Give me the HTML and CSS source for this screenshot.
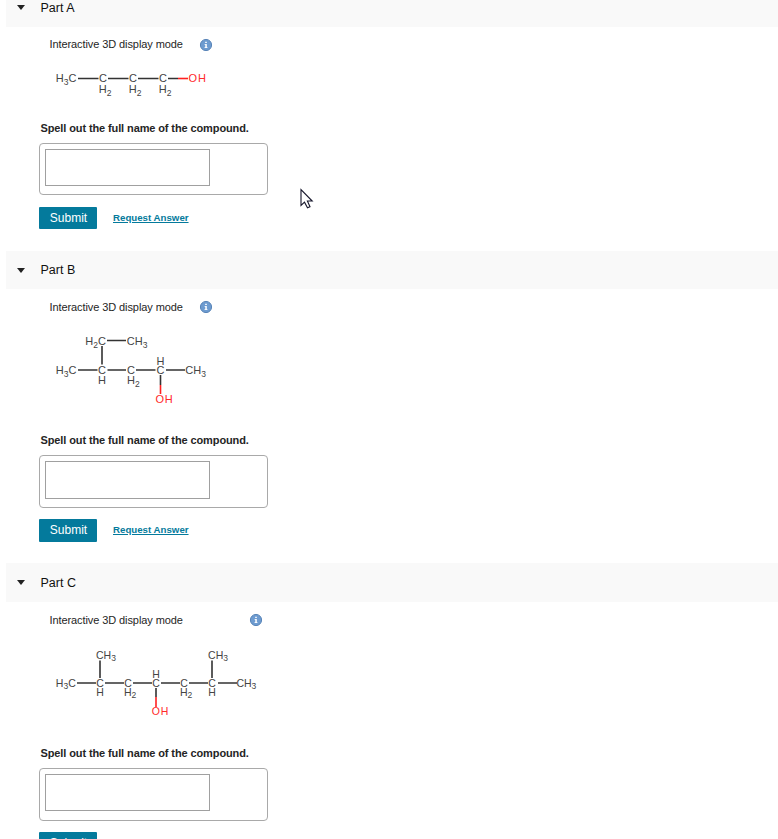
FILE: index.html
```html
<!DOCTYPE html>
<html lang="en">
<head>
    <meta charset="UTF-8">
    <meta name="viewport" content="width=device-width, initial-scale=1.0">
    <title>Naming Alcohols</title>
    <link rel="stylesheet" href="styles.css">
</head>
<body>

    <main class="parts">
        <section class="part part-a">
            <header class="part-header">
                <span class="arrow"></span>
                <h2>Part A</h2>
            </header>
            <div class="mode">
                <span class="mode-label">Interactive 3D display mode</span>
                <svg class="info" width="14" height="14" viewBox="0 0 14 14">
                    <circle cx="7" cy="7" r="5.6" fill="#6d9bd0" stroke="#5985b8"/>
                    <path d="M6.2 3.8h1.6v1.3H6.2zM5.6 6H7.8v3.2h.7v.9h-3v-.9h.8V6.8h-.7z" fill="#fff"/>
                </svg>
            </div>
            <!-- 1-butanol -->
            <svg class="molecule" width="220" height="59">
                <g class="bonds">
                    <path d="M28 18.5H48.5M58 18.5H78.5M88 18.5H108.5M118 18.5H128"/>
                    <path class="red" d="M128 18.5H138"/>
                </g>
                <text x="5.8" y="22">H<tspan class="sub" dy="2.5">3</tspan><tspan dy="-2.5">C</tspan></text>
                <text x="49" y="22">C</text>
                <text x="79" y="22">C</text>
                <text x="109" y="22">C</text>
                <text class="red" x="138.4" y="22" textLength="17.6">OH</text>
                <text x="48.8" y="33">H<tspan class="sub" dy="2.5">2</tspan></text>
                <text x="78.8" y="33">H<tspan class="sub" dy="2.5">2</tspan></text>
                <text x="108.8" y="33">H<tspan class="sub" dy="2.5">2</tspan></text>
            </svg>
            <p class="prompt">Spell out the full name of the compound.</p>
            <div class="answer"><input type="text"></div>
            <div class="actions">
                <button class="submit">Submit</button>
                <a class="request" href="#">Request Answer</a>
            </div>
        </section>

        <section class="part part-b">
            <header class="part-header">
                <span class="arrow"></span>
                <h2>Part B</h2>
            </header>
            <div class="mode">
                <span class="mode-label">Interactive 3D display mode</span>
                <svg class="info" width="14" height="14" viewBox="0 0 14 14">
                    <circle cx="7" cy="7" r="5.6" fill="#6d9bd0" stroke="#5985b8"/>
                    <path d="M6.2 3.8h1.6v1.3H6.2zM5.6 6H7.8v3.2h.7v.9h-3v-.9h.8V6.8h-.7z" fill="#fff"/>
                </svg>
            </div>
            <!-- 4-methyl-2-hexanol -->
            <svg class="molecule" width="220" height="109.5">
                <g class="bonds">
                    <path d="M57 18.5H76M52 24V42.5M28 48H47.5M57.5 48H76M86 48H105.5M116 48H135M110.5 53V63"/>
                    <path class="red" d="M110.5 63V72"/>
                </g>
                <text x="35.3" y="23">H<tspan class="sub" dy="2.5">2</tspan><tspan dy="-2.5">C</tspan></text>
                <text x="76.8" y="23">CH<tspan class="sub" dy="2.5">3</tspan></text>
                <text x="5.8" y="52">H<tspan class="sub" dy="2.5">3</tspan><tspan dy="-2.5">C</tspan></text>
                <text x="48" y="52">C</text>
                <text x="77" y="52">C</text>
                <text x="106.4" y="52">C</text>
                <text x="135.3" y="52">CH<tspan class="sub" dy="2.5">3</tspan></text>
                <text x="106.4" y="43">H</text>
                <text x="48" y="62">H</text>
                <text x="77" y="62">H<tspan class="sub" dy="2.5">2</tspan></text>
                <text class="red" x="105.6" y="81" textLength="17.2">OH</text>
            </svg>
            <p class="prompt">Spell out the full name of the compound.</p>
            <div class="answer"><input type="text"></div>
            <div class="actions">
                <button class="submit">Submit</button>
                <a class="request" href="#">Request Answer</a>
            </div>
        </section>

        <section class="part part-c">
            <header class="part-header">
                <span class="arrow"></span>
                <h2>Part C</h2>
            </header>
            <div class="mode">
                <span class="mode-label">Interactive 3D display mode</span>
                <svg class="info" width="14" height="14" viewBox="0 0 14 14">
                    <circle cx="7" cy="7" r="5.6" fill="#6d9bd0" stroke="#5985b8"/>
                    <path d="M6.2 3.8h1.6v1.3H6.2zM5.6 6H7.8v3.2h.7v.9h-3v-.9h.8V6.8h-.7z" fill="#fff"/>
                </svg>
            </div>
            <!-- 2,6-dimethyl-4-heptanol -->
            <svg class="molecule" width="220" height="109.75">
                <g class="bonds">
                    <path d="M50 25.5V43M162 25.5V43M27 48H46M55 48H74M83 48H102M111 48H130M139 48H158M168 48H187M106 53V62"/>
                    <path class="red" d="M106 62V72"/>
                </g>
                <text x="46" y="24">CH<tspan class="sub" dy="2">3</tspan></text>
                <text x="158.1" y="24">CH<tspan class="sub" dy="2">3</tspan></text>
                <text x="5.8" y="52">H<tspan class="sub" dy="2">3</tspan><tspan dy="-2">C</tspan></text>
                <text x="46.2" y="52">C</text>
                <text x="74.2" y="52">C</text>
                <text x="102.2" y="52">C</text>
                <text x="130.2" y="52">C</text>
                <text x="158.2" y="52">C</text>
                <text x="186.4" y="52">CH<tspan class="sub" dy="2">3</tspan></text>
                <text x="102.2" y="43">H</text>
                <text x="46.2" y="61">H</text>
                <text x="74" y="61">H<tspan class="sub" dy="2">2</tspan></text>
                <text x="130" y="61">H<tspan class="sub" dy="2">2</tspan></text>
                <text x="158.2" y="61">H</text>
                <text class="red" x="101.8" y="80" textLength="16.6">OH</text>
            </svg>
            <p class="prompt">Spell out the full name of the compound.</p>
            <div class="answer"><input type="text"></div>
            <div class="actions">
                <button class="submit">Submit</button>
                <a class="request" href="#">Request Answer</a>
            </div>
        </section>
    </main>

    <svg class="pointer" width="14" height="22" viewBox="0 0 14 22">
        <path d="M1 1.5V17.5L4.5 14.2L7.5 19.8L10 18.7L7.4 13H12.2Z" fill="#fff" stroke="#15152a" stroke-width="1.1"/>
    </svg>

</body>
</html>
```
FILE: styles.css
```css
html, body {
    height: 100%;
    overflow: hidden;
}
body {
    margin: 0;
    background-color: #fff;
    color: #252525;
    font-family: Arial, "Liberation Sans", sans-serif;
}
.parts {
    margin-top: -11.5px;
    padding-left: 6px;
}
.part-header {
    display: flex;
    align-items: center;
    box-sizing: border-box;
    height: 38.5px;
    padding: 1px 0 0 11px;
    background-color: #f9f9f9;
}
.part-a .part-header {
    padding-top: 0;
}
.part-header h2 {
    margin: 0 0 0 15.5px;
    font-size: 12.5px;
    font-weight: normal;
    color: #111;
}
.arrow {
    border-left: 4.5px solid transparent;
    border-right: 4.5px solid transparent;
    border-top: 5px solid #222;
}
.mode {
    display: flex;
    align-items: center;
    justify-content: space-between;
    width: 163.5px;
    height: 35px;
    margin-bottom: -2px;
    padding-left: 43.5px;
    font-size: 11px;
    letter-spacing: -0.09px;
}
.part-a .mode-label {
    margin-top: -1px;
}
.part-c .mode {
    width: 213.5px;
    height: 36px;
    margin-bottom: -3px;
}
.molecule {
    display: block;
    margin-left: 44px;
    font-size: 11px;
    fill: #444;
}
.part-c .molecule {
    font-size: 10.5px;
}
.molecule .sub {
    font-size: 8.5px;
}
.molecule text.red {
    fill: #ff2a2a;
}
.bonds {
    fill: none;
    stroke: #333;
    stroke-width: 1.6;
}
.bonds .red {
    stroke: #ff2020;
}
.prompt {
    height: 23.75px;
    margin: 0 0 0 34.5px;
    line-height: 18px;
    font-size: 11px;
    font-weight: bold;
    letter-spacing: -0.11px;
}
.part-b .prompt {
    line-height: 17px;
}
.answer {
    box-sizing: border-box;
    width: 229px;
    height: 52.5px;
    margin-left: 33px;
    padding: 5px;
    border: 1px solid #a9a9a9;
    border-radius: 4px;
}
.answer input {
    display: block;
    box-sizing: border-box;
    width: 165px;
    height: 37.4px;
    margin: 0;
    border: 1px solid #a0a0a0;
}
.actions {
    display: flex;
    align-items: center;
    gap: 16px;
    margin: 11.5px 0 21.25px 33px;
}
.submit {
    width: 58px;
    height: 22.5px;
    padding: 0 0 1px 1px;
    border: 0;
    border-radius: 1px;
    background-color: #047a9c;
    color: #fff;
    font-family: inherit;
    font-size: 12px;
}
.request {
    margin-top: -1.5px;
    color: #047a9c;
    font-size: 9.7px;
    font-weight: bold;
}
.pointer {
    position: absolute;
    left: 299.5px;
    top: 188px;
}
```
